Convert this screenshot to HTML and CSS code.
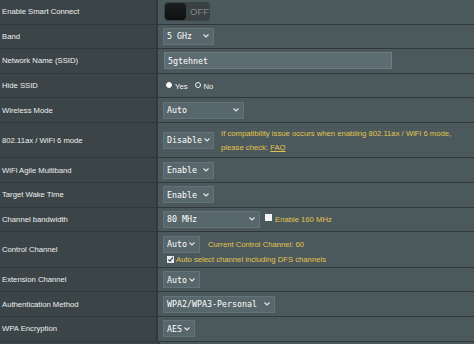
FILE: index.html
```html
<!DOCTYPE html>
<html lang="en">
<head>
    <meta charset="UTF-8">
    <meta name="viewport" content="width=device-width, initial-scale=1.0">
    <title>Wireless - General</title>
    <link rel="stylesheet" href="styles.css">
</head>
<body>
    <div class="settings">
        <div class="row">
            <div class="label">Enable Smart Connect</div>
            <div class="value">
                <div class="toggle"><span class="knob"></span><span class="toggle-text">OFF</span></div>
            </div>
        </div>
        <div class="row">
            <div class="label">Band</div>
            <div class="value">
                <div class="select sel-sm"><span>5 GHz</span><svg class="chev" viewBox="0 0 6 4"><path d="M0.5 0.5L3 3L5.5 0.5"/></svg></div>
            </div>
        </div>
        <div class="row">
            <div class="label">Network Name (SSID)</div>
            <div class="value">
                <div class="text-input">5gtehnet</div>
            </div>
        </div>
        <div class="row">
            <div class="label">Hide SSID</div>
            <div class="value">
                <span class="radio checked"></span><span class="radio-label">Yes</span>
                <span class="radio"></span><span class="radio-label">No</span>
            </div>
        </div>
        <div class="row">
            <div class="label">Wireless Mode</div>
            <div class="value">
                <div class="select sel-md"><span>Auto</span><svg class="chev" viewBox="0 0 6 4"><path d="M0.5 0.5L3 3L5.5 0.5"/></svg></div>
            </div>
        </div>
        <div class="row tall">
            <div class="label">802.11ax / WiFi 6 mode</div>
            <div class="value">
                <div class="select sel-sm"><span>Disable</span><svg class="chev" viewBox="0 0 6 4"><path d="M0.5 0.5L3 3L5.5 0.5"/></svg></div>
                <div class="hint two-line">If compatibility issue occurs when enabling 802.11ax / WiFi 6 mode,<br>please check: <a href="#" class="hint-link">FAQ</a></div>
            </div>
        </div>
        <div class="row">
            <div class="label">WiFi Agile Multiband</div>
            <div class="value">
                <div class="select sel-sm"><span>Enable</span><svg class="chev" viewBox="0 0 6 4"><path d="M0.5 0.5L3 3L5.5 0.5"/></svg></div>
            </div>
        </div>
        <div class="row">
            <div class="label">Target Wake Time</div>
            <div class="value">
                <div class="select sel-sm"><span>Enable</span><svg class="chev" viewBox="0 0 6 4"><path d="M0.5 0.5L3 3L5.5 0.5"/></svg></div>
            </div>
        </div>
        <div class="row">
            <div class="label">Channel bandwidth</div>
            <div class="value">
                <div class="select sel-lg"><span>80 MHz</span><svg class="chev" viewBox="0 0 6 4"><path d="M0.5 0.5L3 3L5.5 0.5"/></svg></div>
                <span class="checkbox"></span><span class="hint">Enable 160 MHz</span>
            </div>
        </div>
        <div class="row tall">
            <div class="label">Control Channel</div>
            <div class="value stacked">
                <div class="line">
                    <div class="select"><span>Auto</span><svg class="chev" viewBox="0 0 6 4"><path d="M0.5 0.5L3 3L5.5 0.5"/></svg></div>
                    <span class="hint channel-hint">Current Control Channel: 60</span>
                </div>
                <div class="line check-line">
                    <span class="checkbox checked"><svg viewBox="0 0 7 7"><path d="M1.3 3.6L2.9 5.2L5.8 1.4"/></svg></span>
                    <span class="hint">Auto select channel including DFS channels</span>
                </div>
            </div>
        </div>
        <div class="row">
            <div class="label">Extension Channel</div>
            <div class="value">
                <div class="select"><span>Auto</span><svg class="chev" viewBox="0 0 6 4"><path d="M0.5 0.5L3 3L5.5 0.5"/></svg></div>
            </div>
        </div>
        <div class="row">
            <div class="label">Authentication Method</div>
            <div class="value">
                <div class="select sel-xl"><span>WPA2/WPA3-Personal</span><svg class="chev" viewBox="0 0 6 4"><path d="M0.5 0.5L3 3L5.5 0.5"/></svg></div>
            </div>
        </div>
        <div class="row">
            <div class="label">WPA Encryption</div>
            <div class="value">
                <div class="select"><span>AES</span><svg class="chev" viewBox="0 0 6 4"><path d="M0.5 0.5L3 3L5.5 0.5"/></svg></div>
            </div>
        </div>
    </div>
</body>
</html>
```

FILE: styles.css
```css
body {
    margin: 0;
    padding: 0;
    background-color: #4c595c;
    font-family: "Liberation Sans", Arial, sans-serif;
    color: #eef0f0;
    overflow: hidden;
}
.settings {
    display: flex;
    flex-direction: column;
    height: 344px;
    background: linear-gradient(to right, #3b4446 158px, #30383a 158px, #30383a 160px, #4c595c 160px);
}
.row {
    display: grid;
    grid-template-columns: 158px 1fr;
    height: 24.6px;
    flex-shrink: 0;
    border-bottom: 1.6px solid #30383a;
    box-sizing: border-box;
}
.row.tall {
    height: 35.5px;
}
.label {
    background-color: #3b4446;
    border-right: 2px solid #30383a;
    padding-left: 2px;
    font-size: 7.7px;
    display: flex;
    align-items: center;
}
.value {
    background-color: #4c595c;
    padding-left: 5px;
    display: flex;
    align-items: center;
    min-width: 0;
}
.value.stacked {
    flex-direction: column;
    align-items: flex-start;
    justify-content: center;
}
.line {
    display: flex;
    align-items: center;
}
.check-line {
    margin-top: 2px;
    padding-left: 4px;
}

/* toggle */
.toggle {
    display: flex;
    align-items: center;
    width: 46px;
    height: 19px;
    margin-left: 1px;
    margin-top: -1px;
    border-radius: 4px;
    background-color: #394143;
    box-sizing: border-box;
    padding: 1px;
}
.knob {
    width: 22px;
    height: 17px;
    border-radius: 4px;
    background: linear-gradient(#1b1e1f, #0d0f10);
}
.toggle-text {
    margin-left: 4px;
    font-size: 9.5px;
    color: #7f8789;
}

/* selects */
.select {
    display: flex;
    align-items: center;
    gap: 2px;
    height: 17px;
    padding: 0 3px 0 3px;
    box-sizing: border-box;
    background-color: #58676b;
    border: 1px solid #637377;
    font-family: "DejaVu Sans Mono", "Liberation Mono", monospace;
    font-size: 8.3px;
    color: #ffffff;
    white-space: nowrap;
}
.sel-sm,
.sel-md,
.sel-lg,
.sel-xl {
    justify-content: space-between;
}
.sel-sm { width: 51px; }
.sel-md { width: 81px; }
.sel-lg { width: 97px; }
.sel-xl { width: 112px; }
.chev {
    width: 6px;
    height: 4px;
    flex-shrink: 0;
    margin-right: 1px;
}
.chev path {
    fill: none;
    stroke: #e4e8e9;
    stroke-width: 1.1;
}

.text-input {
    width: 228px;
    height: 17px;
    margin-left: 1px;
    padding-left: 3px;
    box-sizing: border-box;
    background-color: #5d6c70;
    border: 1px solid #6d7e82;
    font-family: "DejaVu Sans Mono", "Liberation Mono", monospace;
    font-size: 8.3px;
    color: #ffffff;
    display: flex;
    align-items: center;
}

/* radios */
.radio {
    width: 6px;
    height: 6px;
    border-radius: 50%;
    border: 1px solid #f2f2f2;
    box-sizing: border-box;
    margin-top: -2px;
}
.radio:first-child {
    margin-left: 3px;
}
.radio.checked {
    background-color: #ffffff;
}
.radio-label {
    font-size: 7.7px;
    margin-left: 3px;
    margin-right: 7px;
    margin-top: 2px;
}

/* hints */
.hint {
    font-size: 7.7px;
    color: #e2c44c;
    white-space: nowrap;
}
.two-line {
    margin-left: 7px;
    line-height: 14px;
    margin-top: 2px;
}
.hint-link {
    color: #e2c44c;
    text-decoration: underline;
}
.channel-hint {
    margin-left: 8px;
}

.checkbox {
    display: inline-flex;
    width: 7px;
    height: 7px;
    background-color: #f4f4f4;
    margin-left: 5px;
    margin-right: 3px;
    margin-top: -3px;
    flex-shrink: 0;
}
.checkbox.checked {
    margin-left: 0;
    margin-right: 2px;
    margin-top: 0;
    background-color: #e9ebeb;
}
.checkbox svg {
    width: 7px;
    height: 7px;
}
.checkbox path {
    fill: none;
    stroke: #3a4446;
    stroke-width: 1.2;
}
```
